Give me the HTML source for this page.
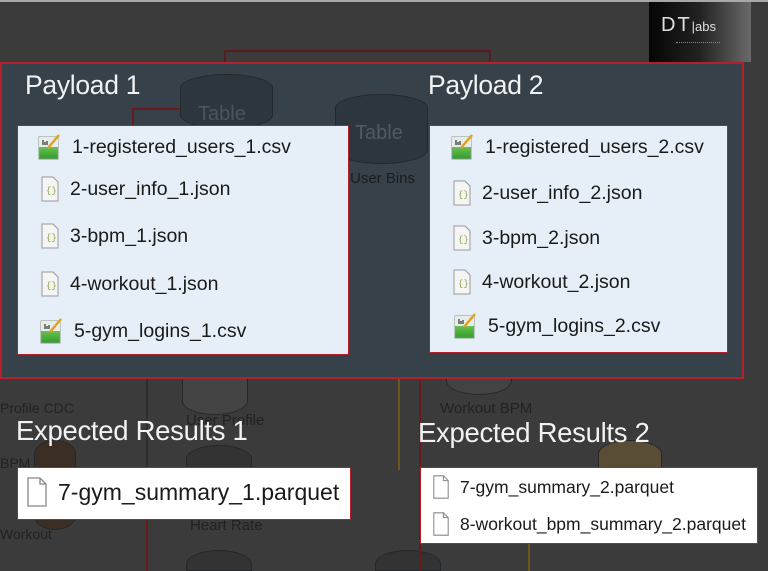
<!DOCTYPE html>
<html><head><meta charset="utf-8"><style>
*{margin:0;padding:0;box-sizing:border-box}
html{width:768px;height:571px;overflow:hidden}
body{width:768px;height:571px;overflow:hidden;background:#3b3b3b;font-family:"Liberation Sans",sans-serif;position:relative}
.a{position:absolute}
.t{color:#f2f2f2;font-size:26.5px;letter-spacing:-0.3px}
.box{position:absolute;background:#e6eff7;border:1.5px solid #b3202a}
.row{position:absolute;left:0;display:flex;align-items:center;font-size:19.5px;color:#1a1a1a;white-space:nowrap}
.row svg{margin-right:10px;flex:none}
.dim{color:#222;font-size:14px;position:absolute}
.cyl{position:absolute;border-radius:50%/14px;background:#2c3238;border:1px solid #25282b}
</style></head><body>
<div class="a" style="left:0;top:0;width:768px;height:2px;background:#a8a8a8"></div>
<div class="a" style="left:224px;top:50px;width:267px;height:70px;border:2px solid #5a1a1f;border-bottom:none"></div>
<div class="cyl" style="left:182px;top:355px;width:66px;height:60px;background:#444"></div>
<div class="cyl" style="left:186px;top:445px;width:66px;height:60px;background:#333"></div>
<div class="cyl" style="left:34px;top:440px;width:42px;height:90px;background:#3a2e25"></div>
<div class="cyl" style="left:446px;top:340px;width:66px;height:55px;background:#434343"></div>
<div class="cyl" style="left:598px;top:440px;width:64px;height:40px;background:#5a4d35"></div>
<div class="cyl" style="left:186px;top:550px;width:66px;height:21px;background:#333;border-radius:50% 50% 0 0/14px 14px 0 0"></div>
<div class="cyl" style="left:375px;top:550px;width:66px;height:21px;background:#333;border-radius:50% 50% 0 0/14px 14px 0 0"></div>
<div class="a" style="left:146px;top:375px;width:2px;height:196px;background:#2e2e2e"></div>
<div class="a" style="left:146px;top:519px;width:2px;height:52px;background:#6a1a1f"></div>
<div class="a" style="left:419px;top:380px;width:2px;height:191px;background:#6a1a1f"></div>
<div class="a" style="left:398px;top:360px;width:2px;height:110px;background:#6b5520"></div>
<div class="a" style="left:528px;top:544px;width:2px;height:27px;background:#6b5520"></div>
<div class="dim" style="left:0;top:400px">Profile CDC</div>
<div class="dim" style="left:0;top:455px">BPM</div>
<div class="dim" style="left:0;top:526px">Workout</div>
<div class="dim" style="left:186px;top:412px;font-size:15px">User Profile</div>
<div class="dim" style="left:190px;top:517px;font-size:15px">Heart Rate</div>
<div class="dim" style="left:440px;top:400px;font-size:15px">Workout BPM</div>
<div class="a" style="left:649px;top:2px;width:102px;height:60px;background:linear-gradient(90deg,#050505 0%,#222 50%,#6a6a6a 100%)"></div>
<div class="a" style="left:661px;top:14px;color:#e0e0e0;font-size:20px;letter-spacing:2px;font-weight:300">DT<span style="font-size:13px;letter-spacing:0">|abs</span></div>
<div class="a" style="left:676px;top:42px;width:44px;height:1px;border-top:1px dotted #888"></div>
<div class="a" style="left:0;top:62px;width:744px;height:317px;background:#36414a;border:2px solid #b3202a"></div>
<div class="cyl" style="left:180px;top:74px;width:93px;height:55px;background:#2d353d"></div>
<div class="a" style="left:198px;top:103px;color:#4a5560;font-size:20px">Table</div>
<div class="cyl" style="left:335px;top:94px;width:93px;height:70px;background:#2d353d"></div>
<div class="a" style="left:355px;top:122px;color:#4f5a65;font-size:20px">Table</div>
<div class="a" style="left:350px;top:170px;color:#1a1d20;font-size:15px">User Bins</div>
<div class="a" style="left:132px;top:108px;width:48px;height:20px;border:2px solid #6a1a1f;border-bottom:none;border-right:none"></div>
<div class="a t" style="left:25px;top:70px">Payload 1</div>
<div class="a t" style="left:428px;top:70px">Payload 2</div>

<svg width="0" height="0" style="position:absolute">
<defs>
<linearGradient id="g" x1="0" y1="0" x2="0" y2="1"><stop offset="0" stop-color="#9ee070"/><stop offset="1" stop-color="#2e9c2a"/></linearGradient>
<symbol id="csv" viewBox="0 0 24 26"><rect x="1" y="3" width="19" height="22" fill="url(#g)" stroke="#8a9a8a"/><rect x="1" y="3" width="19" height="10" fill="#e8ece8"/><path d="M5 11v-5M7 11v-3M9 11v-4" stroke="#333" stroke-width="1.2"/><path d="M10 14L21 1" stroke="#e0a020" stroke-width="2.5"/></symbol>
<symbol id="json" viewBox="0 0 20 26"><path d="M2 1h11l5 5v19H2z" fill="#f5f5f5" stroke="#999"/><text x="6" y="17" font-size="9" fill="#8aa84a" font-family="Liberation Mono">{}</text></symbol>
<symbol id="file" viewBox="0 0 22 30"><path d="M2 1h12l6 6v22H2z" fill="#fff" stroke="#888" stroke-width="1.3"/><path d="M14 1v6h6" fill="none" stroke="#888" stroke-width="1.3"/></symbol>
</defs></svg>

<div class="box" style="left:17px;top:125px;width:332px;height:230px">
<div class="row" style="left:20px;top:8px"><svg width="24" height="26"><use href="#csv"/></svg>1-registered_users_1.csv</div>
<div class="row" style="left:22px;top:50px"><svg width="20" height="26"><use href="#json"/></svg>2-user_info_1.json</div>
<div class="row" style="left:22px;top:97px"><svg width="20" height="26"><use href="#json"/></svg>3-bpm_1.json</div>
<div class="row" style="left:22px;top:145px"><svg width="20" height="26"><use href="#json"/></svg>4-workout_1.json</div>
<div class="row" style="left:22px;top:191px"><svg width="24" height="28"><use href="#csv"/></svg>5-gym_logins_1.csv</div>
</div>
<div class="box" style="left:429px;top:125px;width:299px;height:228px">
<div class="row" style="left:21px;top:8px"><svg width="24" height="26"><use href="#csv"/></svg>1-registered_users_2.csv</div>
<div class="row" style="left:22px;top:54px"><svg width="20" height="26"><use href="#json"/></svg>2-user_info_2.json</div>
<div class="row" style="left:22px;top:99px"><svg width="20" height="26"><use href="#json"/></svg>3-bpm_2.json</div>
<div class="row" style="left:22px;top:143px"><svg width="20" height="26"><use href="#json"/></svg>4-workout_2.json</div>
<div class="row" style="left:24px;top:186px"><svg width="24" height="28"><use href="#csv"/></svg>5-gym_logins_2.csv</div>
</div>

<div class="a t" style="left:16px;top:415px;font-size:27.5px">Expected Results 1</div>
<div class="a t" style="left:418px;top:417px;font-size:27.5px">Expected Results 2</div>

<div class="a" style="left:17px;top:467px;width:334px;height:53px;background:#fff;border:1.5px solid #b3202a">
<div class="row" style="left:8px;top:9px;font-size:23px"><svg width="22" height="30"><use href="#file"/></svg>7-gym_summary_1.parquet</div>
</div>
<div class="a" style="left:420px;top:467px;width:338px;height:77px;background:#fff;border:1.5px solid #b3202a">
<div class="row" style="left:11px;top:7px;font-size:17.5px"><svg width="18" height="24"><use href="#file"/></svg>7-gym_summary_2.parquet</div>
<div class="row" style="left:11px;top:44px;font-size:17.5px"><svg width="18" height="24"><use href="#file"/></svg>8-workout_bpm_summary_2.parquet</div>
</div>
</body></html>
